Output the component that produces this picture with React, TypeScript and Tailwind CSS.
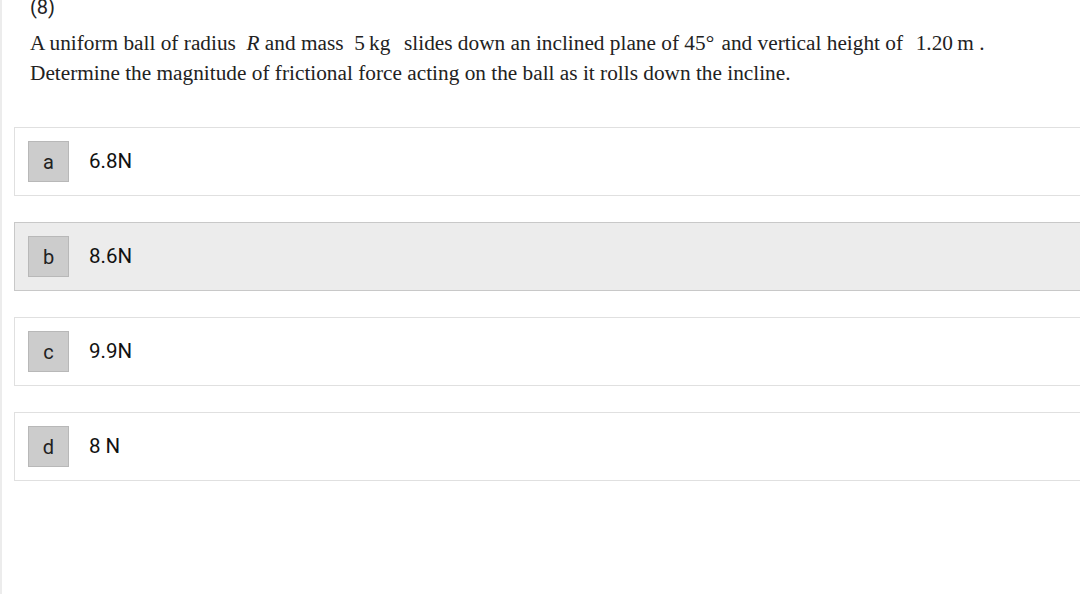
import React from "react";

const options = [
  { l: "a", t: "6.8N", sel: false },
  { l: "b", t: "8.6N", sel: true },
  { l: "c", t: "9.9N", sel: false },
  { l: "d", t: "8 N", sel: false },
];

export default function App() {
  return (
    <div className="w-[1080px] h-[594px] overflow-hidden bg-white border-l-2 border-[#ececec] relative">
      <div className="pl-[28px] -mt-[5px]">
        <div className="text-[20px] leading-[24px] text-[#222] font-['Roboto',sans-serif]">(8)</div>
        <div className="mt-[9px] text-[21.3px] leading-[30px] text-[#222] font-['Liberation_Serif',serif]">
          <div>
            A uniform ball of radius&nbsp; <i>R</i> and mass&nbsp; <span className="mr-[3px]">5&#8201;kg</span>&nbsp; slides down an inclined plane of <span className="mr-[2px]">45°</span> and vertical height of&nbsp; <span className="ml-[2px]">1.20&#8201;m</span>&nbsp;.
          </div>
          <div>Determine the magnitude of frictional force acting on the ball as it rolls down the incline.</div>
        </div>
      </div>
      <div className="pl-[12px] mt-[39px] flex flex-col gap-[26px]">
        {options.map((o) => (
          <div
            key={o.l}
            className={
              "w-[1100px] h-[69px] flex items-center px-[13px] border " +
              (o.sel ? "bg-[#ececec] border-[#c8c8c8]" : "bg-white border-[#e0e0e0]")
            }
          >
            <div className="w-[41px] h-[41px] bg-[#cccccc] border border-[#b8b8b8] flex items-center justify-center text-[20px] text-[#222] font-['Roboto',sans-serif]">
              {o.l}
            </div>
            <div className="ml-[20px] text-[20.5px] text-[#111] font-['Roboto',sans-serif]">{o.t}</div>
          </div>
        ))}
      </div>
    </div>
  );
}
